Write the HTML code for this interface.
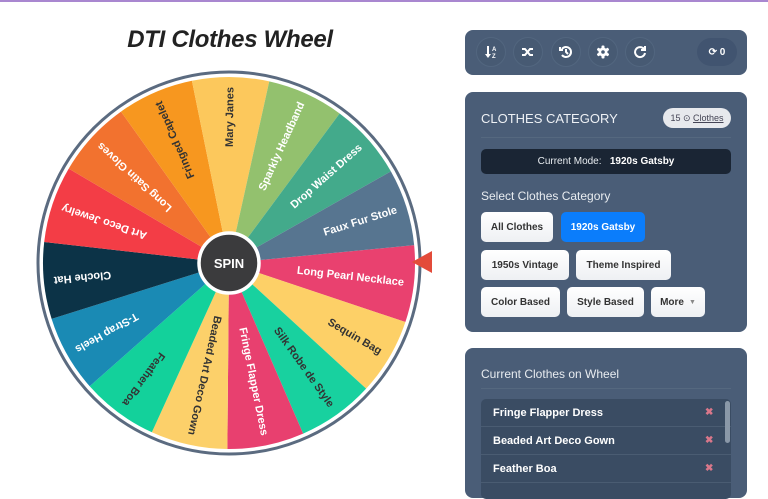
<!DOCTYPE html>
<html><head><meta charset="utf-8"><style>
*{box-sizing:border-box;margin:0;padding:0}
body{width:768px;height:486px;overflow:hidden;background:#fff;font-family:"Liberation Sans",sans-serif;position:relative}
.topline{position:absolute;left:0;top:0;width:768px;height:2px;background:#a987d0}
h1{position:absolute;left:0;width:460px;top:26px;text-align:center;font-size:24px;font-style:italic;font-weight:bold;color:#222;letter-spacing:-0.3px}
.wheel{position:absolute;left:36px;top:70px}
.pointer{position:absolute;left:412px;top:251px;width:0;height:0;border-top:11px solid transparent;border-bottom:11px solid transparent;border-right:20px solid #e34b3a}
.panel{position:absolute;left:465px;width:282px;background:#4a5d77;border-radius:8px}
.ib{position:absolute;top:7px;width:30px;height:30px;border-radius:50%;background:#475a73;border:1px solid #52667f;display:flex;align-items:center;justify-content:center}
.cnt{position:absolute;left:232px;top:8px;width:40px;height:28px;border-radius:14px;background:#415470;color:#fff;font-size:10px;font-weight:bold;display:flex;align-items:center;justify-content:center}
.hdr{position:absolute;left:16px;top:19px;color:#eef1f5;font-size:13px}
.pill{position:absolute;left:198px;top:16px;width:68px;height:20px;border-radius:10px;background:#e7e9ed;color:#445;font-size:9px;display:flex;align-items:center;justify-content:center}
.div{position:absolute;left:16px;right:16px;height:1px;border-top:1px solid #55687f}
.mode{position:absolute;left:16px;top:57px;width:250px;height:25px;border-radius:5px;background:#1a2534;color:#e8ecf0;font-size:10px;display:flex;align-items:center;justify-content:center}
.sel{position:absolute;left:16px;top:97px;color:#e8ecf0;font-size:12px}
.b{position:absolute;height:30px;border-radius:5px;background:linear-gradient(#fff,#eef0f3);color:#333;font-size:10px;font-weight:bold;display:flex;align-items:center;justify-content:center}
.b.on{background:#0b7dfb;color:#fff}
.list{position:absolute;left:16px;top:51px;width:250px;height:100px;background:#3a4c63;border-radius:5px;overflow:hidden}
.it{height:28px;border-bottom:1px solid #4a5c72;color:#fff;font-size:11px;font-weight:bold;padding-left:12px;display:flex;align-items:center;position:relative}
.it span{position:absolute;left:224px;color:#d9778a;font-size:10px}
</style></head><body>
<div class="topline"></div>
<h1>DTI Clothes Wheel</h1>
<svg class="wheel" width="386" height="386" viewBox="-193 -193 386 386" font-family="Liberation Sans, sans-serif" font-weight="bold" font-size="11">
<circle r="191" fill="#fff" stroke="#5b6b80" stroke-width="3"/>
<defs><path id="w" d="M0 0L181.93 -38.67A186 186 0 0 1 181.93 38.67Z"/></defs>
<g>
<use href="#w" transform="rotate(6.5)" fill="#e9416f"/>
<use href="#w" transform="rotate(30.5)" fill="#fdd067"/>
<use href="#w" transform="rotate(54.5)" fill="#18d19f"/>
<use href="#w" transform="rotate(78.5)" fill="#e8406f"/>
<use href="#w" transform="rotate(102.5)" fill="#fcd06a"/>
<use href="#w" transform="rotate(126.5)" fill="#13d19b"/>
<use href="#w" transform="rotate(150.5)" fill="#1a8ab4"/>
<use href="#w" transform="rotate(174.5)" fill="#0c3347"/>
<use href="#w" transform="rotate(198.5)" fill="#f33d46"/>
<use href="#w" transform="rotate(222.5)" fill="#f2722f"/>
<use href="#w" transform="rotate(246.5)" fill="#f7971f"/>
<use href="#w" transform="rotate(270.5)" fill="#fcc85c"/>
<use href="#w" transform="rotate(294.5)" fill="#93c16e"/>
<use href="#w" transform="rotate(318.5)" fill="#43aa8b"/>
<use href="#w" transform="rotate(342.5)" fill="#577590"/>
</g>
<g text-anchor="end" dominant-baseline="middle">
<text transform="rotate(6.5)" x="176" fill="#fff">Long Pearl Necklace</text>
<text transform="rotate(30.5)" x="176" fill="#333">Sequin Bag</text>
<text transform="rotate(54.5)" x="176" fill="#333">Silk Robe de Style</text>
<text transform="rotate(78.5)" x="176" fill="#fff">Fringe Flapper Dress</text>
<text transform="rotate(102.5)" x="176" fill="#333">Beaded Art Deco Gown</text>
<text transform="rotate(126.5)" x="176" fill="#333">Feather Boa</text>
<text transform="rotate(150.5)" x="176" fill="#fff">T-Strap Heels</text>
<text transform="rotate(174.5)" x="176" fill="#fff">Cloche Hat</text>
<text transform="rotate(198.5)" x="176" fill="#fff">Art Deco Jewelry</text>
<text transform="rotate(222.5)" x="176" fill="#fff">Long Satin Gloves</text>
<text transform="rotate(246.5)" x="176" fill="#333">Fringed Capelet</text>
<text transform="rotate(270.5)" x="176" fill="#333">Mary Janes</text>
<text transform="rotate(294.5)" x="176" fill="#fff">Sparkly Headband</text>
<text transform="rotate(318.5)" x="176" fill="#fff">Drop Waist Dress</text>
<text transform="rotate(342.5)" x="176" fill="#fff">Faux Fur Stole</text>
</g>
<circle r="30" fill="#3b3b3d" stroke="#fff" stroke-width="3.5"/>
<text y="5" text-anchor="middle" fill="#fff" font-size="13">SPIN</text>
</svg>
<div class="pointer"></div>

<div class="panel" style="top:30px;height:45px">
<div class="ib" style="left:11px"><svg width="14" height="14" viewBox="0 0 14 14" fill="#fff"><path d="M3 1h2v8h2l-3 4-3-4h2z"/><text x="8" y="6" font-size="6" font-weight="bold">A</text><text x="8" y="13" font-size="6" font-weight="bold">Z</text></svg></div>
<div class="ib" style="left:48px"><svg width="14" height="14" viewBox="0 0 14 14" fill="none" stroke="#fff" stroke-width="2"><path d="M1 4h3l5 6h3M1 10h3l5-6h3"/></svg></div>
<div class="ib" style="left:86px"><svg width="14" height="14" viewBox="0 0 14 14" fill="none" stroke="#fff" stroke-width="2"><path d="M3 4A5 5 0 1 1 3 10M7 4v3l2 2"/><path d="M1 2v3h3"/></svg></div>
<div class="ib" style="left:123px"><svg width="14" height="14" viewBox="0 0 14 14"><g fill="#fff"><rect x="5.5" y="0.5" width="3" height="13" rx="1"/><rect x="5.5" y="0.5" width="3" height="13" rx="1" transform="rotate(60 7 7)"/><rect x="5.5" y="0.5" width="3" height="13" rx="1" transform="rotate(120 7 7)"/><circle cx="7" cy="7" r="4.5"/></g><circle cx="7" cy="7" r="1.8" fill="#475a73"/></svg></div>
<div class="ib" style="left:160px"><svg width="14" height="14" viewBox="0 0 14 14" fill="none" stroke="#fff" stroke-width="2"><path d="M11 4A5 5 0 1 0 12 8"/><path d="M12 1v4h-4" fill="#fff"/></svg></div>
<div class="cnt">⟳&nbsp;0</div>
</div>

<div class="panel" style="top:92px;height:240px">
<div class="hdr">CLOTHES CATEGORY</div>
<div class="pill">15 ⊙&nbsp;<u>Clothes</u></div>
<div class="div" style="top:45px"></div>
<div class="mode">Current Mode:&nbsp;&nbsp;&nbsp;<b style="color:#fff">1920s Gatsby</b></div>
<div class="sel">Select Clothes Category</div>
<div class="b" style="left:16px;top:120px;width:72px">All Clothes</div>
<div class="b on" style="left:96px;top:120px;width:84px">1920s Gatsby</div>
<div class="b" style="left:16px;top:158px;width:88px">1950s Vintage</div>
<div class="b" style="left:111px;top:158px;width:95px">Theme Inspired</div>
<div class="b" style="left:16px;top:195px;width:79px">Color Based</div>
<div class="b" style="left:102px;top:195px;width:77px">Style Based</div>
<div class="b" style="left:186px;top:195px;width:54px">More <span style="font-size:7px;color:#888;margin-left:5px">▼</span></div>
</div>

<div class="panel" style="top:348px;height:150px">
<div class="sel" style="top:19px">Current Clothes on Wheel</div>
<div class="div" style="top:40px"></div>
<div class="list">
<div class="it">Fringe Flapper Dress<span>✖</span></div>
<div class="it">Beaded Art Deco Gown<span>✖</span></div>
<div class="it">Feather Boa<span>✖</span></div>
<div style="position:absolute;left:244px;top:2px;width:5px;height:42px;border-radius:3px;background:#8a98a8"></div>
</div>
</div>
</body></html>
